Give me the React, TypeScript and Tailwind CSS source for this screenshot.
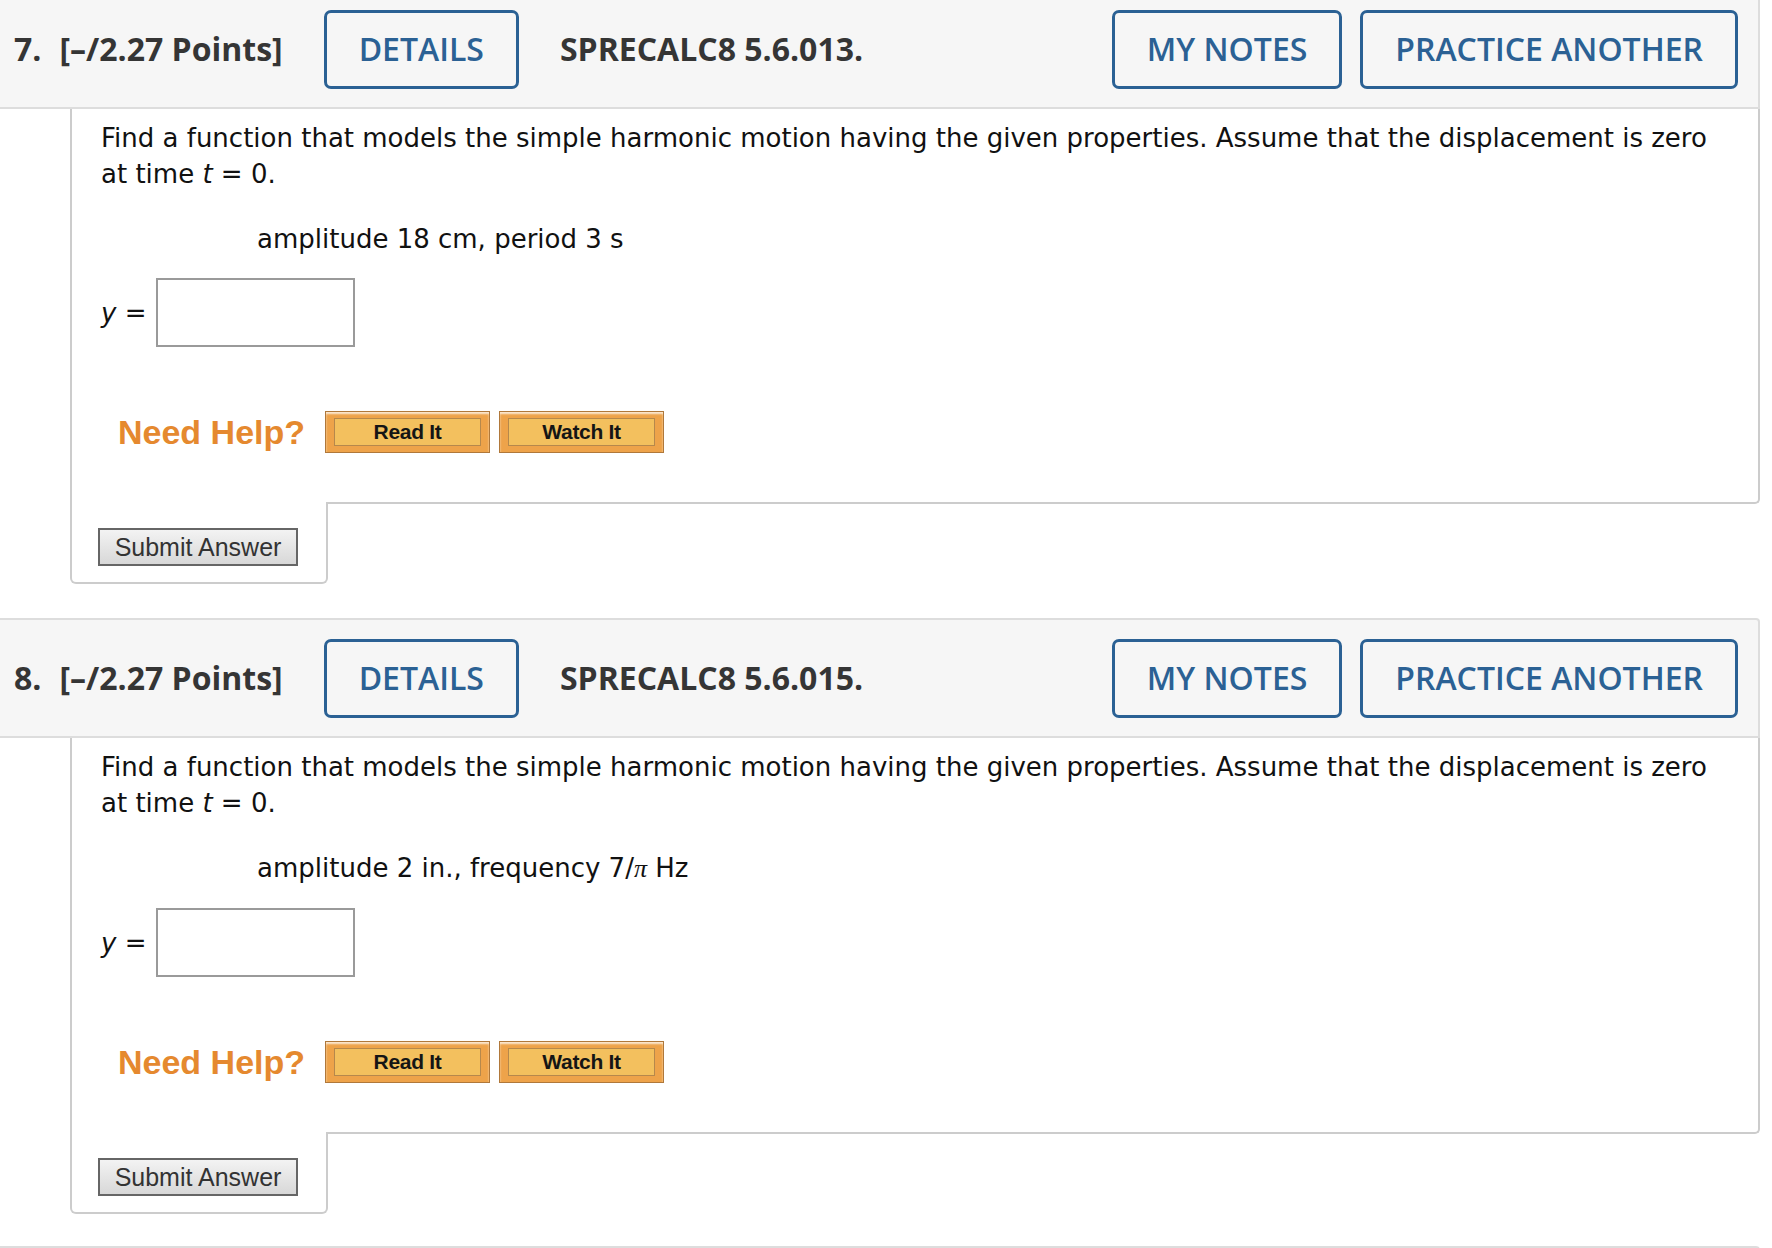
import React from 'react';

interface Question {
  num: number;
  code: string;
  given: React.ReactNode;
}

const questions: Question[] = [
  {
    num: 7,
    code: 'SPRECALC8 5.6.013.',
    given: <>amplitude 18 cm, period 3 s</>
  },
  {
    num: 8,
    code: 'SPRECALC8 5.6.015.',
    given: (
      <>
        amplitude 2 in., frequency 7/
        <span className="font-['Liberation_Serif',serif] italic">π</span> Hz
      </>
    )
  }
];

const HeaderButton: React.FC<{ label: string; className?: string }> = ({ label, className = '' }) => (
  <button
    className={`h-[79px] px-[32px] border-[3px] border-[#2b6194] rounded-[7px] text-[32px] font-semibold text-[#2b6194] leading-none ${className}`}
  >
    {label}
  </button>
);

const HelpButton: React.FC<{ label: string; className?: string }> = ({ label, className = '' }) => (
  <div
    className={`w-[165px] h-[42px] px-[8px] py-[6px] border border-[#b0783a] bg-[#eea34a] shadow-[inset_0_2px_2px_rgba(255,255,255,0.75)] ${className}`}
  >
    <div className="h-full flex items-center justify-center border border-[#b6884c] bg-[#f3c05e] font-['Liberation_Sans',Arial,sans-serif] font-bold text-[21px] tracking-[-0.3px] text-[#151515]">
      {label}
    </div>
  </div>
);

const QuestionBlock: React.FC<{ q: Question }> = ({ q }) => (
  <div>
    {/* cabecera */}
    <div className="flex items-center h-[120px] pl-[14px] pr-[20px] bg-[#f6f6f6] border-t-2 border-b-2 border-r-2 border-[#dddddd] rounded-tr-[4px] font-['Open_Sans',sans-serif]">
      <span className="text-[32px] font-bold text-[#353535]">{q.num}.</span>
      <span className="ml-[18px] text-[32px] font-bold text-[#353535]">[–/2.27 Points]</span>
      <HeaderButton label="DETAILS" className="ml-[41px]" />
      <span className="ml-[41px] text-[32px] font-bold text-[#353535]">{q.code}</span>
      <div className="ml-auto flex gap-[18px]">
        <HeaderButton label="MY NOTES" />
        <HeaderButton label="PRACTICE ANOTHER" />
      </div>
    </div>

    {/* cuerpo */}
    <div className="ml-[70px]">
      <div className="border-l-2 border-r-2 border-b-2 border-[#cccccc] rounded-br-[5px] pl-[29px] pr-[16px] pt-[11px] pb-[49px] font-['DejaVu_Sans',Verdana,sans-serif] text-[26px] leading-[36px] text-[#111111]">
        <p className="whitespace-nowrap">
          Find a function that models the simple harmonic motion having the given properties. Assume that the displacement is zero
          <br />
          at time <i>t</i> = 0.
        </p>
        <p className="mt-[29px] pl-[156px]">{q.given}</p>
        <div className="mt-[21px] flex items-center">
          <span>
            <i>y</i> =
          </span>
          <div className="ml-[10px] w-[199px] h-[69px] border-2 border-[#9a9a9a] bg-white" />
        </div>
        <div className="mt-[64px] flex items-center pl-[17px]">
          <span className="font-['Liberation_Sans',Arial,sans-serif] font-bold text-[34px] leading-none text-[#e5892f]">
            Need Help?
          </span>
          <HelpButton label="Read It" className="ml-[20px]" />
          <HelpButton label="Watch It" className="ml-[9px]" />
        </div>
      </div>
      <div className="relative -mt-[2px] w-[258px] bg-white border-l-2 border-r-2 border-b-2 border-[#cccccc] rounded-b-[6px] pl-[26px] pt-[26px] pb-[16px]">
        <button className="w-[200px] h-[38px] border-2 border-[#666666] bg-linear-to-b from-[#f3f3f3] to-[#d8d8d8] font-['Liberation_Sans',Arial,sans-serif] text-[25px] leading-none text-[#333333]">
          Submit Answer
        </button>
      </div>
    </div>
  </div>
);

export default function App() {
  return (
    <div className="h-[1248px] overflow-hidden bg-white pr-[12px]">
      <div className="-mt-[11px] flex flex-col gap-[34px]">
        {questions.map((q) => (
          <QuestionBlock key={q.num} q={q} />
        ))}
        <div className="-mt-[2px] h-[120px] bg-[#f6f6f6] border-t-2 border-r-2 border-[#dddddd] rounded-tr-[4px]" />
      </div>
    </div>
  );
}
